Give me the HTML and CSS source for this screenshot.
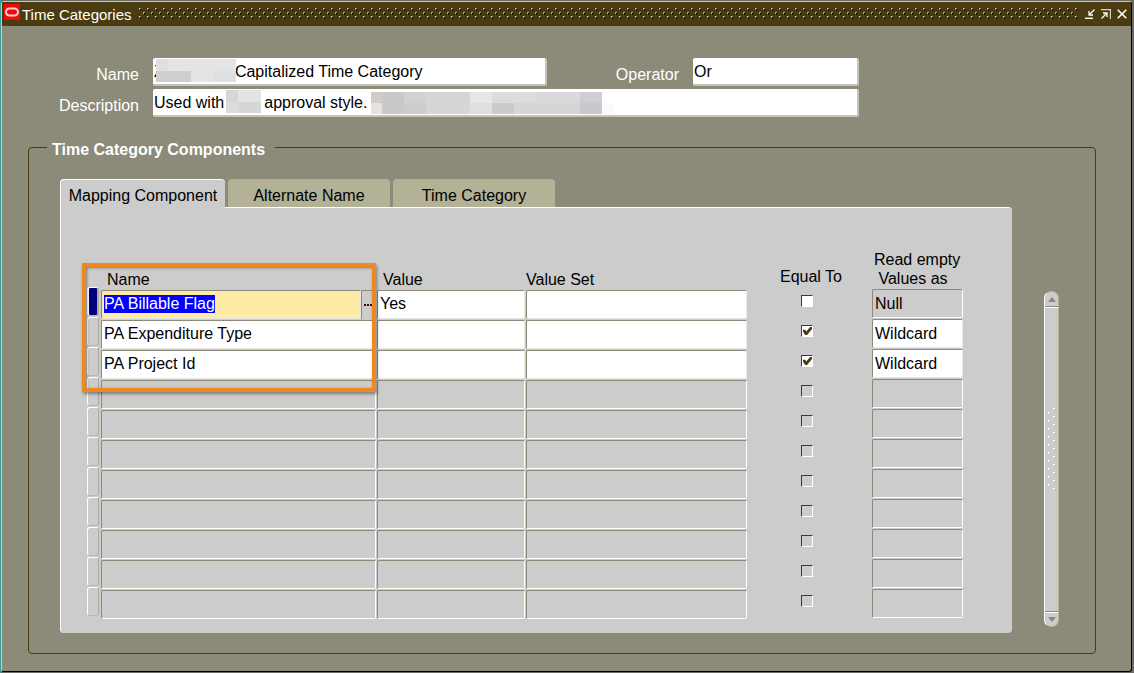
FILE: index.html
```html
<!DOCTYPE html>
<html lang="en">
<head>
    <meta charset="utf-8">
    <title>Time Categories</title>
    <link rel="stylesheet" href="styles.css">
</head>
<body>
<div class="window">

    <div class="titlebar">
        <svg class="logo" width="16" height="16" viewBox="0 0 16 16"><rect width="16" height="16" fill="#f00a0a"/><rect x="2" y="4.500" width="12" height="7" rx="3.500" fill="none" stroke="#ffd0d0" stroke-width="2"/></svg>
        <h1>Time Categories</h1>
        <svg class="grip" height="12">
            <defs>
                <pattern id="dots" width="8" height="8" patternUnits="userSpaceOnUse">
                    <path d="M0 0h2v1h-1v1h-1zM4 4h2v1h-1v1h-1z" fill="#b5ad80"/>
                    <path d="M1 1h1v1h-1zM5 5h1v1h-1z" fill="#000"/>
                    <path d="M2 1h1v1h-1v1h-1v-1h1zM6 5h1v1h-1v1h-1v-1h1z" fill="#1c1604"/>
                </pattern>
            </defs>
            <rect width="100%" height="12" fill="url(#dots)"/>
        </svg>
        <div class="controls">
            <button type="button" aria-label="Minimize"><svg width="10" height="10" viewBox="0 0 10 10"><path d="M0 9.300h8" fill="none" stroke="#fff" stroke-width="1.400"/><path d="M9.500 .5L4.500 5.500M4 2v4h4" fill="none" stroke="#fff" stroke-width="1.300"/></svg></button>
            <button type="button" aria-label="Restore"><svg width="10" height="10" viewBox="0 0 10 10"><path d="M0 .6h9.400v9.400" fill="none" stroke="#d8d4c0" stroke-width="1.200"/><path d="M.5 9.500L5.500 4.500M2 4h4v4" fill="none" stroke="#fff" stroke-width="1.300"/></svg></button>
            <button type="button" aria-label="Close"><svg width="10" height="10" viewBox="0 0 10 10"><path d="M.7 .7l8.600 8.600M9.300 .7L.7 9.300" fill="none" stroke="#fff" stroke-width="1.600"/></svg></button>
        </div>
    </div>

    <div class="header-form">
        <label for="name">Name</label>
        <div class="field">
            <input type="text" id="name" value="Z&nbsp;&nbsp;&nbsp;&nbsp;&nbsp;&nbsp;&nbsp;&nbsp;&nbsp;&nbsp;&nbsp;&nbsp;&nbsp;&nbsp;&nbsp;&nbsp;Capitalized Time Category">
            <svg class="mask mask-name" width="80" height="23" shape-rendering="crispEdges">
                <rect width="80" height="23" fill="#e4e4e5"/>
                <rect width="12" height="12" fill="#dfdfe0"/>
                <rect y="12" width="35" height="11" fill="#cfcfd0"/>
                <rect x="58" y="12" width="22" height="11" fill="#dedfe0"/>
            </svg>
        </div>
        <label for="operator">Operator</label>
        <div class="field"><input type="text" id="operator" value="Or"></div>

        <label for="description">Description</label>
        <div class="field wide">
            <input type="text" id="description" value="Used with&nbsp;&nbsp;&nbsp;&nbsp;&nbsp;&nbsp;&nbsp;&nbsp;&nbsp;approval style.">
            <svg class="mask mask-used" width="35" height="23" shape-rendering="crispEdges">
                <rect width="35" height="23" fill="#d7d6d7"/>
                <rect x="12" width="23" height="12" fill="#e4e3e4"/>
                <rect y="12" width="12" height="11" fill="#dddcdd"/>
            </svg>
            <svg class="mask mask-style" width="243" height="22" shape-rendering="crispEdges">
                <rect width="231" height="22" fill="#d6d6d8"/>
                <rect width="11" height="11" fill="#d2cbc6"/>
                <rect y="11" width="11" height="11" fill="#e4e3e2"/>
                <rect x="11" width="22" height="22" fill="#c9c9cc"/>
                <rect x="33" width="22" height="11" fill="#d2d2d4"/>
                <rect x="33" y="11" width="22" height="11" fill="#cdcdd0"/>
                <rect x="99" width="22" height="11" fill="#e6e6e7"/>
                <rect x="99" y="11" width="22" height="11" fill="#e0dfde"/>
                <rect x="121" width="44" height="11" fill="#dcdcde"/>
                <rect x="121" y="11" width="22" height="11" fill="#cbcbce"/>
                <rect x="165" width="44" height="11" fill="#dadadc"/>
                <rect x="209" width="22" height="11" fill="#cfcfd3"/>
                <rect x="209" y="11" width="22" height="11" fill="#c9c9cd"/>
                <rect x="231" y="11" width="12" height="11" fill="#fafafa"/>
            </svg>
        </div>
    </div>

    <fieldset class="components">
        <legend>Time Category Components</legend>

        <div class="components-body">
            <div class="tabbed">
                <div class="tabs" role="tablist">
                    <button type="button" role="tab" class="tab active" aria-selected="true">Mapping Component</button>
                    <button type="button" role="tab" class="tab">Alternate Name</button>
                    <button type="button" role="tab" class="tab">Time Category</button>
                </div>

                <div class="panel" role="tabpanel">
                    <div class="grid">
                        <table>
                            <colgroup>
                                <col class="col-mark">
                                <col>
                                <col class="col-value">
                                <col class="col-set">
                                <col class="col-equal">
                                <col class="col-read">
                            </colgroup>
                            <thead>
                                <tr>
                                    <th></th>
                                    <th class="indent">Name</th>
                                    <th class="indent">Value</th>
                                    <th>Value Set</th>
                                    <th class="equal">Equal To</th>
                                    <th class="read">Read empty<br>&nbsp;Values as</th>
                                </tr>
                            </thead>
                            <tbody>
                                <tr class="current">
                                    <td><div class="mark"></div></td>
                                    <td class="cell"><div class="lov"><input type="text" id="current" aria-label="Name" value="PA Billable Flag"><button type="button" aria-label="List of values"><svg width="9" height="2"><path d="M0 0h2v2h-2zM3 0h2v2h-2zM6 0h2v2h-2z" fill="#3a0505"/></svg></button></div></td>
                                    <td class="cell"><input type="text" aria-label="Value" value="Yes"></td>
                                    <td class="cell"><input type="text" aria-label="Value Set"></td>
                                    <td class="equal"><input type="checkbox" aria-label="Equal To"></td>
                                    <td><select aria-label="Read empty Values as" disabled><option>Null</option></select></td>
                                </tr>
                                <tr>
                                    <td><div class="mark"></div></td>
                                    <td class="cell"><input type="text" aria-label="Name" value="PA Expenditure Type"></td>
                                    <td class="cell"><input type="text" aria-label="Value"></td>
                                    <td class="cell"><input type="text" aria-label="Value Set"></td>
                                    <td class="equal"><input type="checkbox" aria-label="Equal To" checked></td>
                                    <td><select aria-label="Read empty Values as"><option>Wildcard</option><option>Null</option></select></td>
                                </tr>
                                <tr>
                                    <td><div class="mark"></div></td>
                                    <td class="cell"><input type="text" aria-label="Name" value="PA Project Id"></td>
                                    <td class="cell"><input type="text" aria-label="Value"></td>
                                    <td class="cell"><input type="text" aria-label="Value Set"></td>
                                    <td class="equal"><input type="checkbox" aria-label="Equal To" checked></td>
                                    <td><select aria-label="Read empty Values as"><option>Wildcard</option><option>Null</option></select></td>
                                </tr>
                                <tr>
                                    <td><div class="mark"></div></td>
                                    <td class="cell"><input type="text" aria-label="Name" disabled></td>
                                    <td class="cell"><input type="text" aria-label="Value" disabled></td>
                                    <td class="cell"><input type="text" aria-label="Value Set" disabled></td>
                                    <td class="equal"><input type="checkbox" aria-label="Equal To" disabled></td>
                                    <td><select aria-label="Read empty Values as" disabled></select></td>
                                </tr>
                                <tr>
                                    <td><div class="mark"></div></td>
                                    <td class="cell"><input type="text" aria-label="Name" disabled></td>
                                    <td class="cell"><input type="text" aria-label="Value" disabled></td>
                                    <td class="cell"><input type="text" aria-label="Value Set" disabled></td>
                                    <td class="equal"><input type="checkbox" aria-label="Equal To" disabled></td>
                                    <td><select aria-label="Read empty Values as" disabled></select></td>
                                </tr>
                                <tr>
                                    <td><div class="mark"></div></td>
                                    <td class="cell"><input type="text" aria-label="Name" disabled></td>
                                    <td class="cell"><input type="text" aria-label="Value" disabled></td>
                                    <td class="cell"><input type="text" aria-label="Value Set" disabled></td>
                                    <td class="equal"><input type="checkbox" aria-label="Equal To" disabled></td>
                                    <td><select aria-label="Read empty Values as" disabled></select></td>
                                </tr>
                                <tr>
                                    <td><div class="mark"></div></td>
                                    <td class="cell"><input type="text" aria-label="Name" disabled></td>
                                    <td class="cell"><input type="text" aria-label="Value" disabled></td>
                                    <td class="cell"><input type="text" aria-label="Value Set" disabled></td>
                                    <td class="equal"><input type="checkbox" aria-label="Equal To" disabled></td>
                                    <td><select aria-label="Read empty Values as" disabled></select></td>
                                </tr>
                                <tr>
                                    <td><div class="mark"></div></td>
                                    <td class="cell"><input type="text" aria-label="Name" disabled></td>
                                    <td class="cell"><input type="text" aria-label="Value" disabled></td>
                                    <td class="cell"><input type="text" aria-label="Value Set" disabled></td>
                                    <td class="equal"><input type="checkbox" aria-label="Equal To" disabled></td>
                                    <td><select aria-label="Read empty Values as" disabled></select></td>
                                </tr>
                                <tr>
                                    <td><div class="mark"></div></td>
                                    <td class="cell"><input type="text" aria-label="Name" disabled></td>
                                    <td class="cell"><input type="text" aria-label="Value" disabled></td>
                                    <td class="cell"><input type="text" aria-label="Value Set" disabled></td>
                                    <td class="equal"><input type="checkbox" aria-label="Equal To" disabled></td>
                                    <td><select aria-label="Read empty Values as" disabled></select></td>
                                </tr>
                                <tr>
                                    <td><div class="mark"></div></td>
                                    <td class="cell"><input type="text" aria-label="Name" disabled></td>
                                    <td class="cell"><input type="text" aria-label="Value" disabled></td>
                                    <td class="cell"><input type="text" aria-label="Value Set" disabled></td>
                                    <td class="equal"><input type="checkbox" aria-label="Equal To" disabled></td>
                                    <td><select aria-label="Read empty Values as" disabled></select></td>
                                </tr>
                                <tr>
                                    <td><div class="mark"></div></td>
                                    <td class="cell"><input type="text" aria-label="Name" disabled></td>
                                    <td class="cell"><input type="text" aria-label="Value" disabled></td>
                                    <td class="cell"><input type="text" aria-label="Value Set" disabled></td>
                                    <td class="equal"><input type="checkbox" aria-label="Equal To" disabled></td>
                                    <td><select aria-label="Read empty Values as" disabled></select></td>
                                </tr>
                            </tbody>
                        </table>
                        <div class="callout"></div>
                    </div>
                </div>
            </div>

            <div class="scrollbar">
                <button type="button" class="up" aria-label="Scroll up"><svg width="8" height="5"><path d="M4 0L8 5H0z" fill="#8b8977"/></svg></button>
                <div class="thumb">
                    <svg width="8" height="84">
                        <defs>
                            <pattern id="thumb-dots" width="8" height="8" patternUnits="userSpaceOnUse">
                                <path d="M5 0h2v1h-1v1h-1zM0 4h2v1h-1v1h-1z" fill="#fff"/>
                                <path d="M6 1h1v1h-1zM1 5h1v1h-1z" fill="#999"/>
                            </pattern>
                        </defs>
                        <rect width="8" height="82" fill="url(#thumb-dots)"/>
                    </svg>
                </div>
                <button type="button" class="down" aria-label="Scroll down"><svg width="8" height="5"><path d="M0 0H8L4 5z" fill="#8b8977"/></svg></button>
            </div>
        </div>
    </fieldset>

</div>
<script>
    // the form opens with the first record selected
    var current = document.getElementById('current');
    current.focus();
    current.select();
</script>
</body>
</html>
```
FILE: styles.css
```css
*
{
	box-sizing: border-box;
	margin: 0;
	padding: 0;
}
html
{
	background: #6b6a66;
}
body
{
	min-width: 900px;
	min-height: 100vh;
	display: flex;
	padding: 1px 2px 1px 0;
	border-left: 1px solid #3f9a9e;
	color: #000;
	font: 16px/19px "Liberation Sans", Arial, sans-serif;
}
input, select, button
{
	font: inherit;
	color: inherit;
	border-radius: 0;
	outline: none;
}
button
{
	border: 0;
	background: none;
}
svg
{
	display: block;
}

.window
{
	flex: 1;
	border: 1px solid #000;
	border-top-color: #d0c8a8;
	border-left-color: #c4cdc4;
	border-radius: 3px;
	background: #8c8a79;
}

/* title bar */
.titlebar
{
	display: flex;
	align-items: center;
	height: 24px;
	padding: 0 4px 0 2px;
	background: #4a3c10;
	color: #fff;
}
.titlebar h1
{
	margin: 0 8px 0 2px;
	font-size: 15px;
	font-weight: normal;
}
.logo
{
	margin-bottom: 4px;
}
.grip
{
	flex: 1;
	min-width: 0;
}
.controls
{
	display: flex;
	gap: 6px;
	margin-left: 6px;
}

/* name, operator, description */
.header-form
{
	display: grid;
	grid-template-columns: 137px 394fr 118px 166fr;
	gap: 3px 14px;
	max-width: 857px;
	padding-top: 32px;
}
.header-form label
{
	padding-top: 7px;
	color: #fff;
	text-align: right;
}
.field
{
	position: relative;
}
.field input
{
	display: block;
	width: 100%;
	height: 28px;
	padding: 1px 0 0 1px;
	border: solid #c4c3b6;
	border-width: 0 2px 2px 0;
	border-radius: 2px;
	background: #fff;
}
.wide
{
	grid-column: span 3;
}
.mask
{
	position: absolute;
}
.mask-name
{
	left: 3px;
	top: 1px;
}
.mask-used
{
	left: 73px;
	top: 1px;
}
.mask-style
{
	left: 218px;
	top: 3px;
}

/* group box */
.components
{
	margin: 19px 35px 17px 26px;
	border: 1px solid #4a3c10;
	border-radius: 4px;
	padding: 20px 36px 20px 31px;
	min-width: 0;
}
.components legend
{
	margin-left: -13px;
	padding: 4px 10px 0 5px;
	color: #fff;
	font-weight: bold;
	line-height: 19px;
}
.components-body
{
	display: flex;
	gap: 32px;
}
.tabbed
{
	flex: 1;
	min-width: 0;
}
.tabs
{
	display: flex;
	gap: 3px;
}
.tab
{
	width: 162px;
	height: 28px;
	padding-top: 4px;
	border-radius: 4px 4px 0 0;
	background: #b3b196;
	white-space: nowrap;
}
.tab.active
{
	position: relative;
	width: 165px;
	height: 29px;
	margin-bottom: -1px;
	padding-top: 2px;
	border: solid #fff;
	border-width: 1px 0 0 1px;
	background: #ccc;
}
.panel
{
	padding: 42px 49px 14px 26px;
	border: solid #fff;
	border-width: 1px 0 0 1px;
	border-radius: 0 4px 4px 4px;
	background: #ccc;
}

/* records */
.grid
{
	position: relative;
}
table
{
	width: 100%;
	table-layout: fixed;
	border-collapse: collapse;
}
.col-mark
{
	width: 14px;
}
.col-value
{
	width: 149px;
}
.col-set
{
	width: 222px;
}
.col-equal
{
	width: 124px;
}
.col-read
{
	width: 91px;
}
th
{
	font-weight: normal;
	text-align: left;
	vertical-align: bottom;
	white-space: nowrap;
}
th.indent
{
	padding-left: 6px;
}
th.equal
{
	padding: 0 0 3px 32px;
}
th.read
{
	padding: 0 0 1px 2px;
}
td
{
	height: 30px;
	vertical-align: top;
}
td.cell
{
	padding: 1px 1px 0 0;
}
td.equal
{
	padding: 6px 0 0 53px;
}
td input[type=text], select
{
	display: block;
	appearance: none;
	width: 100%;
	height: 29px;
	padding: 0 0 1px 2px;
	border: 1px solid #8b8977;
	border-right-color: #e8e8e4;
	border-bottom-color: #e8e8e4;
	border-radius: 2px;
	background: #fff;
}
td input[type=text]:disabled, select:disabled
{
	border-right-color: #fff;
	border-bottom-color: #fff;
	background: #ccc;
	color: #000;
	opacity: 1;
}
.lov
{
	display: flex;
}
.lov input[type=text]
{
	flex: 1;
	min-width: 0;
	background: #ffeba6;
	line-height: 22px;
}
.lov input::selection
{
	background: #00f;
	color: #fff;
}
.lov button
{
	width: 15px;
	padding-left: 2px;
	border: solid #8b8977;
	border-width: 1px 0 0 1px;
	background: #ccc;
}
.mark
{
	width: 12px;
	height: 29px;
	margin-top: -2px;
	border: 1px solid #fff;
	border-right-color: #a9a899;
	border-bottom-color: #b9b9b0;
	border-radius: 3px;
}
.current .mark
{
	background: #00007b;
	border-width: 1px 2px;
}
input[type=checkbox]
{
	display: block;
	appearance: none;
	width: 12px;
	height: 12px;
	border: 1px solid #4a3c10;
	border-right-color: #fff;
	border-bottom-color: #fff;
	background: #fff;
}
input[type=checkbox]:disabled
{
	background: #ccc;
}
input[type=checkbox]:checked::before
{
	content: "";
	display: block;
	width: 9px;
	height: 8px;
	margin: 1px 0 0 1px;
	background: #4a3c10;
	clip-path: polygon(0 35%, 25% 35%, 36% 55%, 80% 0, 100% 0, 100% 25%, 45% 100%, 25% 100%, 0 60%);
}

/* box round the mapped records */
.callout
{
	position: absolute;
	left: -5px;
	top: 13px;
	right: 587px;
	height: 129px;
	border: 4px solid #ee8822;
	box-shadow: 1px 2px 3px rgba(0, 0, 0, .4), inset 1px 1px 3px rgba(0, 0, 0, .4);
	pointer-events: none;
}

/* scroll bar */
.scrollbar
{
	display: flex;
	flex-direction: column;
	width: 15px;
	margin: 112px 0 6px;
	border: 1px solid #b3b196;
	border-left-color: #fff;
	border-radius: 7px;
	background: #ccc;
}
.scrollbar button
{
	display: flex;
	align-items: center;
	justify-content: center;
	height: 14px;
}
.thumb
{
	flex: 1;
	display: flex;
	align-items: center;
	justify-content: center;
	padding-bottom: 18px;
	border: solid #8b8977;
	border-width: 1px 0;
	box-shadow: inset 0 1px #fff, 0 1px #fff;
}
```
